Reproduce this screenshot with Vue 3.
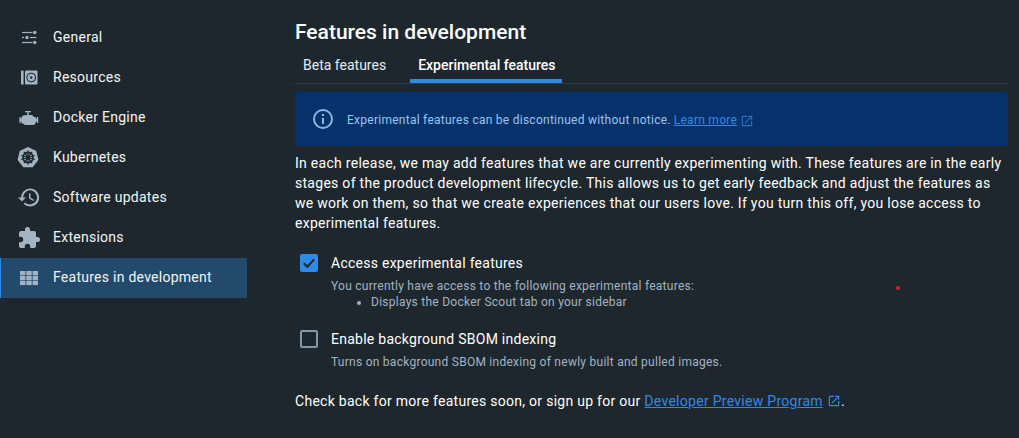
<script setup>
import { ref } from 'vue'

const navItems = [
  { label: 'General', icon: 'general' },
  { label: 'Resources', icon: 'resources' },
  { label: 'Docker Engine', icon: 'engine' },
  { label: 'Kubernetes', icon: 'kube' },
  { label: 'Software updates', icon: 'updates' },
  { label: 'Extensions', icon: 'extensions' },
  { label: 'Features in development', icon: 'features', active: true }
]

const accessExperimental = ref(true)
const sbomIndexing = ref(false)
</script>

<template>
  <div class="page">
    <nav class="sidebar">
      <a v-for="item in navItems" :key="item.label" class="nav-item" :class="{ active: item.active }">
        <svg class="nav-icon" viewBox="0 0 24 24">
          <g v-if="item.icon === 'general'" fill="#a3b3c2">
            <rect x="5" y="6.900" width="10.500" height="1.200" />
            <circle cx="17.800" cy="7.500" r="1.700" />
            <rect x="5" y="11.900" width="2" height="1.200" />
            <circle cx="10" cy="12.500" r="1.700" />
            <rect x="13" y="11.900" width="6.500" height="1.200" />
            <rect x="5" y="16.900" width="10.500" height="1.200" />
            <circle cx="17.800" cy="17.500" r="1.700" />
          </g>
          <g v-else-if="item.icon === 'resources'">
            <rect x="4" y="5.500" width="2.600" height="14" rx="0.600" fill="#a3b3c2" />
            <rect x="8" y="5.500" width="12.500" height="14" rx="1" fill="#a3b3c2" />
            <circle cx="14.200" cy="12.500" r="4.300" fill="none" stroke="#1e272e" stroke-width="1.100" />
            <circle cx="14.200" cy="12.500" r="1.200" fill="#1e272e" />
          </g>
          <path v-else-if="item.icon === 'engine'" fill="#a3b3c2" d="M8 6h6v1.200h-2.300V10H15l2 2h1.800v1.500H20V12h1.200v6H20v-1.500h-1.200V18l-2 2H8l-2-1.500H4.500v-2H3.500V18H2.300v-6h1.200v1.500h1V12L6 10.500l4.300-.5V7.200H8z" />
          <g v-else-if="item.icon === 'kube'">
            <path fill="#a3b3c2" d="M11 2l8.300 3.900 2.100 9.100-5.800 7.200H6.400L.6 15l2.100-9.100z" />
            <circle cx="11" cy="12.500" r="5" fill="none" stroke="#1e272e" stroke-width="1.800" />
            <circle cx="11" cy="12.500" r="1.700" fill="#1e272e" />
            <path stroke="#1e272e" stroke-width="1.300" d="M11 5.500v14M4.200 10.500l13.600 4M17.800 10.500l-13.600 4M7 6.800l8 11.400M15 6.800l-8 11.400" />
          </g>
          <path v-else-if="item.icon === 'updates'" fill="#a3b3c2" transform="translate(0 0.500)" d="M13 3a9 9 0 0 0-9 9H1l3.900 3.900L9 12H6a7 7 0 1 1 2.100 4.900l-1.400 1.400A9 9 0 1 0 13 3zm-1 5v5l4.300 2.500.7-1.200-3.500-2.100V8z" />
          <path v-else-if="item.icon === 'extensions'" fill="#a3b3c2" transform="translate(0 1)" d="M20.500 11H19V7a2 2 0 0 0-2-2h-4V3.500a2.500 2.500 0 0 0-5 0V5H4a2 2 0 0 0-2 2v3.800h1.500a2.700 2.700 0 0 1 0 5.400H2V20a2 2 0 0 0 2 2h3.800v-1.500a2.700 2.700 0 0 1 5.400 0V22H17a2 2 0 0 0 2-2v-4h1.500a2.500 2.500 0 0 0 0-5z" />
          <g v-else fill="#a3b3c2">
            <rect x="3" y="6" width="5.400" height="4.300" />
            <rect x="9.300" y="6" width="5.400" height="4.300" />
            <rect x="15.600" y="6" width="5.400" height="4.300" />
            <rect x="3" y="10.900" width="5.400" height="4.300" />
            <rect x="9.300" y="10.900" width="5.400" height="4.300" />
            <rect x="15.600" y="10.900" width="5.400" height="4.300" />
            <rect x="3" y="15.800" width="5.400" height="4.300" />
            <rect x="9.300" y="15.800" width="5.400" height="4.300" />
            <rect x="15.600" y="15.800" width="5.400" height="4.300" />
          </g>
        </svg>
        <span class="nav-label">{{ item.label }}</span>
      </a>
    </nav>

    <main class="content">
      <h1 class="title">Features in development</h1>
      <div class="tabs">
        <div class="tab">Beta features</div>
        <div class="tab selected">Experimental features</div>
      </div>

      <div class="alert">
        <svg class="alert-icon" viewBox="0 0 24 24">
          <path fill="#8db4de" d="M11 7h2v2h-2zm0 4h2v6h-2zm1-9a10 10 0 1 0 0 20a10 10 0 0 0 0-20zm0 18a8 8 0 1 1 0-16a8 8 0 0 1 0 16z" />
        </svg>
        <span class="alert-text">Experimental features can be discontinued without notice.</span>
        <a class="link alert-link">Learn more</a>
        <svg class="ext-icon small" viewBox="0 0 24 24">
          <path fill="currentColor" d="M19 19H5V5h7V3H5a2 2 0 0 0-2 2v14a2 2 0 0 0 2 2h14a2 2 0 0 0 2-2v-7h-2zM14 3v2h3.600l-9.800 9.800 1.400 1.400L19 6.400V10h2V3z" />
        </svg>
      </div>

      <p class="intro">
        In each release, we may add features that we are currently experimenting with. These features are in the early
        stages of the product development lifecycle. This allows us to get early feedback and adjust the features as
        we work on them, so that we create experiences that our users love. If you turn this off, you lose access to
        experimental features.
      </p>

      <div class="option first">
        <span class="checkbox" :class="{ checked: accessExperimental }">
          <svg v-if="accessExperimental" viewBox="0 0 18 18">
            <path fill="none" stroke="#1e272e" stroke-width="2" d="M3.800 9.200l3.600 3.600 6.800-7.400" />
          </svg>
        </span>
        <div>
          <div class="option-label">Access experimental features</div>
          <div class="option-help">You currently have access to the following experimental features:</div>
          <ul class="option-list">
            <li>Displays the Docker Scout tab on your sidebar</li>
          </ul>
        </div>
      </div>

      <div class="option second">
        <span class="checkbox" :class="{ checked: sbomIndexing }"></span>
        <div>
          <div class="option-label">Enable background SBOM indexing</div>
          <div class="option-help">Turns on background SBOM indexing of newly built and pulled images.</div>
        </div>
      </div>

      <p class="footer-note">
        Check back for more features soon, or sign up for our
        <a class="link">Developer Preview Program</a>
        <svg class="ext-icon" viewBox="0 0 24 24">
          <path fill="currentColor" d="M19 19H5V5h7V3H5a2 2 0 0 0-2 2v14a2 2 0 0 0 2 2h14a2 2 0 0 0 2-2v-7h-2zM14 3v2h3.600l-9.800 9.800 1.400 1.400L19 6.400V10h2V3z" />
        </svg>.
      </p>
    </main>

    <span class="red-dot"></span>
  </div>
</template>

<style>
html,
body {
  margin: 0;
  background: #1e272e;
}
</style>

<style scoped>
.page {
  position: relative;
  display: flex;
  width: 1019px;
  height: 438px;
  overflow: hidden;
  background: #1e272e;
  color: #fff;
  font-family: Roboto, "Liberation Sans", sans-serif;
  font-size: 14px;
  letter-spacing: 0.26px;
}
.sidebar {
  width: 247px;
  flex-shrink: 0;
  padding-top: 18px;
}
.nav-item {
  display: flex;
  align-items: center;
  height: 40px;
  padding-left: 17px;
  box-sizing: border-box;
  color: #f2f5f7;
}
.nav-item.active {
  background: #23496b;
  box-shadow: inset 1px 0 0 #2e8ae6;
}
.nav-icon {
  width: 24px;
  height: 24px;
  margin: -2px 12px 0 0;
}
.nav-label {
  padding-bottom: 2px;
}
.content {
  width: 713px;
  margin-left: 48px;
}
.title {
  margin: 0;
  padding-top: 19px;
  font-size: 21px;
  line-height: 26px;
  font-weight: 500;
  letter-spacing: 0;
}
.tabs {
  display: flex;
  height: 38px;
  border-bottom: 1px solid #323c44;
  letter-spacing: 0;
}
.tab {
  padding: 12px 8px 0;
  margin-right: 16px;
  box-sizing: border-box;
  color: #e6eaee;
}
.tab.selected {
  width: 152px;
  white-space: nowrap;
  color: #fff;
  font-weight: 500;
  border-bottom: 4px solid #2e8ae6;
  height: 38px;
}
.alert {
  display: flex;
  align-items: center;
  height: 54px;
  margin-top: 8px;
  padding-left: 16px;
  border-radius: 3px;
  background: #05326b;
  font-size: 12px;
  color: #9cc4ef;
}
.alert-icon {
  width: 24px;
  height: 24px;
  margin-right: 12px;
}
.alert-text {
  padding-top: 2px;
}
.alert-link {
  margin-left: 3px;
  padding-top: 2px;
}
.link {
  color: #2e8ae6;
  text-decoration: underline;
}
.ext-icon {
  width: 14px;
  height: 14px;
  margin-left: 4px;
  color: #2e8ae6;
  vertical-align: -2px;
}
.ext-icon.small {
  margin: 4px 0 0 3px;
  color: #2a6fc0;
}
.intro {
  margin: 7px 0 0;
  line-height: 20px;
  letter-spacing: 0.28px;
}
.option {
  display: flex;
}
.option.first {
  margin-top: 20px;
}
.option.second {
  margin-top: 19px;
}
.checkbox {
  width: 18px;
  height: 18px;
  margin: 1px 13px 0 5px;
  box-sizing: border-box;
  border: 2px solid #8497a6;
  border-radius: 2px;
  flex-shrink: 0;
}
.checkbox.checked {
  background: #2e8ae6;
  border: none;
}
.checkbox svg {
  display: block;
  width: 18px;
  height: 18px;
}
.option-label {
  line-height: 20px;
}
.option-help {
  margin-top: 5px;
  font-size: 12px;
  line-height: 16px;
  color: #a3b3c2;
}
.option-list {
  margin: 0;
  padding-left: 40px;
  font-size: 12px;
  line-height: 16px;
  color: #a3b3c2;
}
.footer-note {
  margin: 21px 0 0;
  line-height: 20px;
  letter-spacing: 0.28px;
}
.red-dot {
  position: absolute;
  left: 896px;
  top: 286px;
  width: 4px;
  height: 4px;
  border-radius: 50%;
  background: #e02020;
}
</style>
